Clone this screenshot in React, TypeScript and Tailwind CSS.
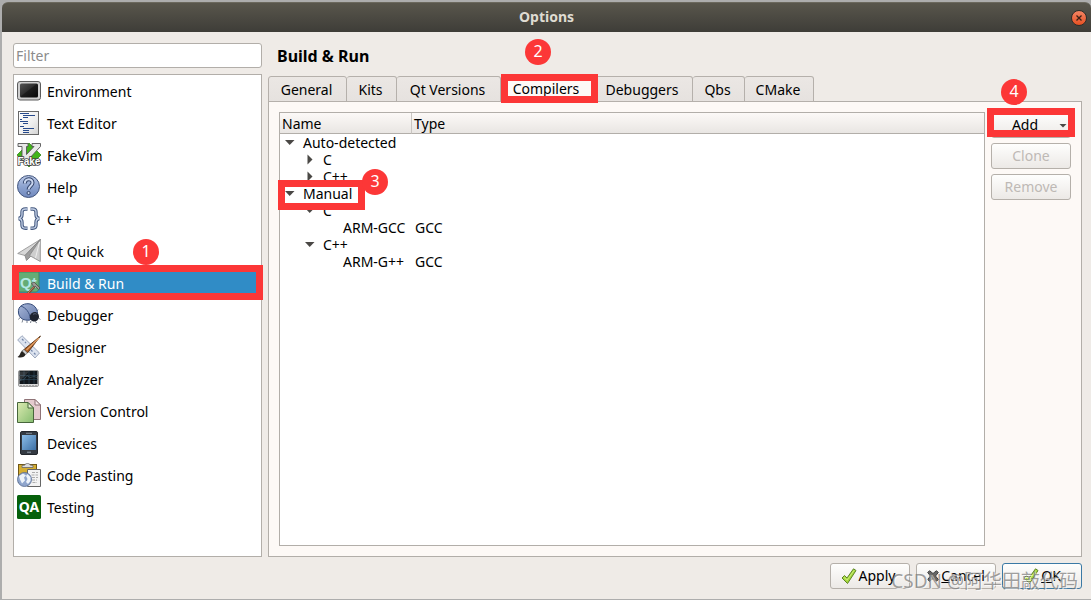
import { useState } from "react";
import type { ReactNode } from "react";
import clsx from "clsx";

function Icon({ children }: { children: ReactNode }) {
  return (
    <svg viewBox="0 0 24 24" className="size-6 shrink-0" aria-hidden="true">
      {children}
    </svg>
  );
}

const EnvironmentIcon = () => (
  <Icon>
    <defs>
      <linearGradient id="envScreen" x1="0" y1="0" x2="1" y2="1">
        <stop offset="0" stopColor="#555" />
        <stop offset="0.45" stopColor="#303030" />
        <stop offset="0.5" stopColor="#1c1c1c" />
        <stop offset="1" stopColor="#080808" />
      </linearGradient>
    </defs>
    <rect x="0.5" y="2.5" width="23" height="18.5" rx="2.5" fill="#cfcfcf" stroke="#5c5c5c" />
    <rect x="3" y="4.5" width="18" height="14" rx="1.5" fill="url(#envScreen)" />
  </Icon>
);

const TextEditorIcon = () => (
  <Icon>
    <defs>
      <linearGradient id="sheet" x1="0" y1="0" x2="1" y2="1">
        <stop offset="0" stopColor="#fff" />
        <stop offset="0.6" stopColor="#eee" />
        <stop offset="1" stopColor="#d2d2d2" />
      </linearGradient>
    </defs>
    <rect x="1.5" y="0.5" width="20" height="23" fill="url(#sheet)" stroke="#686868" />
    <path
      d="M3 2.5h9M6 4.5h12M6 6.5h5M3 8.5h2M3 10.5h8M6 12.5h5M3 15.5h4M6 17.5h11M6 19.5h6M6 21.5h6"
      stroke="#274a8c"
    />
  </Icon>
);

const FakeVimIcon = () => (
  <Icon>
    <path d="M12 0l12 12-12 12L0 12z" fill="#41b41a" stroke="#287b0d" strokeWidth="0.7" />
    <path
      d="M1 0.5h10v3H9.500v8L17 3.500h-2v-3h8.500v3L10 18H5V3.500H1z"
      fill="#e8e8e8"
      stroke="#555"
      strokeWidth="0.9"
    />
    <text
      x="12"
      y="21.500"
      textAnchor="middle"
      fontSize="10"
      fontWeight="700"
      fontFamily="Liberation Sans, sans-serif"
      fill="#fff"
      stroke="#444"
      strokeWidth="1.600"
      paintOrder="stroke"
    >
      Fake
    </text>
  </Icon>
);

const HelpIcon = () => (
  <Icon>
    <defs>
      <linearGradient id="helpBall" x1="0" y1="0" x2="0" y2="1">
        <stop offset="0" stopColor="#b9c8e6" />
        <stop offset="0.5" stopColor="#8da3d0" />
        <stop offset="1" stopColor="#7088bd" />
      </linearGradient>
    </defs>
    <circle cx="11.5" cy="11.5" r="11" fill="url(#helpBall)" stroke="#43557d" />
    <path
      d="M7.800 8.500C7.800 2.800 15.500 3 15.500 7.800c0 3.200-3.900 3.200-3.900 6.700"
      fill="none"
      stroke="#35466c"
      strokeWidth="4"
    />
    <path
      d="M7.800 8.500C7.800 2.800 15.500 3 15.500 7.800c0 3.200-3.900 3.200-3.900 6.700"
      fill="none"
      stroke="#c9d6ef"
      strokeWidth="2"
    />
    <circle cx="11.600" cy="18" r="1.600" fill="#c9d6ef" stroke="#35466c" />
  </Icon>
);

const bracesPath =
  "M10.500 2H8.500C6 2 5 3 5 5v2.500c0 2-1 3.500-3.200 4C4 12 5 13.500 5 15.500V18c0 2 1 3.200 3.500 3.200h2M13.500 2h2C18 2 19 3 19 5v2.500c0 2 1 3.500 3.200 4C20 12 19 13.500 19 15.500V18c0 2-1 3.200-3.500 3.200h-2";

const CppIcon = () => (
  <Icon>
    <path d={bracesPath} fill="none" stroke="#465a80" strokeWidth="3.400" />
    <path d={bracesPath} fill="none" stroke="#c3d0e6" strokeWidth="1.300" />
  </Icon>
);

const QtQuickIcon = () => (
  <Icon>
    <path d="M23.300 0.500L0.700 14.500l7.300 2z" fill="#d7d7d7" stroke="#8e8e8e" strokeWidth="0.8" />
    <path d="M23.300 0.500L8 16.500l1.500 5 4-4z" fill="#9d9d9d" stroke="#808080" strokeWidth="0.8" />
    <path d="M23.300 0.500l-10.800 16 10.800 6z" fill="#cecece" stroke="#858585" strokeWidth="0.8" />
    <path d="M22.500 3l-4 16" stroke="#efefef" />
  </Icon>
);

const BuildRunIcon = () => (
  <Icon>
    <path d="M2.500 1H22v17.500L19.500 21H0.500V3z" fill="#65ac75" stroke="#43875e" />
    <text
      x="3"
      y="17"
      fontSize="15"
      fontWeight="700"
      fontFamily="Liberation Sans Narrow, Liberation Sans, sans-serif"
      fill="#b4e8e6"
    >
      Qt
    </text>
    <path d="M18.500 14.500l-7.500 8" stroke="#7b4d32" strokeWidth="2.400" />
    <path d="M18.500 14l-7.500 8" stroke="#b98b69" />
    <path d="M14.500 12.500l2.500-1.500 6 6-1.500 1.500-3-3-1.500.5z" fill="#9a9a94" stroke="#504e48" strokeWidth="0.8" />
  </Icon>
);

const DebuggerIcon = () => (
  <Icon>
    <defs>
      <linearGradient id="bugShell" x1="0" y1="0" x2="1" y2="1">
        <stop offset="0" stopColor="#a9b8d9" />
        <stop offset="1" stopColor="#6177a8" />
      </linearGradient>
    </defs>
    <path
      d="M3.500 14l-2 2.500M6 16.500l-1 3M10 17.500v2.500M20 8l1-1.500M21.500 15l2 1.500M14 18l-.5 2M18 18.500l2 1.500"
      stroke="#5b6474"
      strokeWidth="0.8"
    />
    <path
      d="M1.500 10C0.500 3 6.500 0.700 11 0.700c6 .2 9.500 5 9.500 9.300L13 17C7 18 2.300 15.500 1.500 10z"
      fill="url(#bugShell)"
      stroke="#354b79"
    />
    <path d="M4 3C9 5 12.500 9 13.500 16" fill="none" stroke="#3a5180" />
    <path d="M13 12.500c1-3.500 6-5 8-2 2 3 1 7-3 8-3.500.5-6-2.500-5-6z" fill="#1e2431" />
    <path d="M16 11.500c1-1 2.500-1 3.500-.3" stroke="#59657b" fill="none" />
  </Icon>
);

const DesignerIcon = () => (
  <Icon>
    <path d="M0.700 5L5 0.700 22.500 18 18 23z" fill="#dce3ef" stroke="#9ca7bd" />
    <path d="M5 4l1.500 1.500M8 7l1 1M14 15l1.500 1.500M17 18l1.500 1.500" stroke="#7487aa" strokeWidth="1.300" />
    <path d="M23.500 1L10.500 18 7 14.500 21 3z" fill="#aa5b21" stroke="#472409" strokeWidth="0.8" />
    <path d="M22 3L9.500 15" stroke="#e2a067" strokeWidth="1.200" />
    <path d="M10.500 18L7 14.500l-2 1.300L8.500 19.500z" fill="#d3d3d3" stroke="#555" strokeWidth="0.600" />
    <path d="M5 16c-2 1-1.500 4.500-4.500 6 3.500 1.300 7.500 0 8-2.500z" fill="#282522" />
  </Icon>
);

const AnalyzerIcon = () => (
  <Icon>
    <rect x="1.500" y="3.500" width="20" height="16" rx="1.500" fill="#d7d7d7" stroke="#9b9b9b" />
    <rect x="2.500" y="4" width="18" height="13" fill="#10161b" />
    <path d="M7 4v13M12 4v13M17 4v13M2.500 8.500h18M2.500 12.500h18" stroke="#2b4455" strokeWidth="0.700" />
    <path d="M3 13.500l4-1 3-4 3 2 4-1 3 1" stroke="#45606f" fill="none" strokeWidth="0.600" />
    <path d="M3 4.500h9L3 14z" fill="#fff" opacity="0.15" />
    <path d="M3 18.500h17" stroke="#a5a5a5" strokeDasharray="2 1" />
  </Icon>
);

const VersionControlIcon = () => (
  <Icon>
    <defs>
      <linearGradient id="greenSheet" x1="0" y1="0" x2="1" y2="1">
        <stop offset="0" stopColor="#dceab1" />
        <stop offset="1" stopColor="#86bd70" />
      </linearGradient>
    </defs>
    <path d="M7.500 0.500H18l5.500 5.500v14.500h-16z" fill="#e4cbce" stroke="#8f7377" />
    <path d="M18 0.500V6h5.500z" fill="#f5e9ea" stroke="#8f7377" />
    <path d="M0.500 3.500H11l5.500 5.500v14.500H0.500z" fill="url(#greenSheet)" stroke="#47663b" />
    <path d="M11 3.500V9h5.500z" fill="#e3f0cf" stroke="#47663b" />
  </Icon>
);

const DevicesIcon = () => (
  <Icon>
    <defs>
      <linearGradient id="deviceScreen" x1="0" y1="0" x2="1" y2="1">
        <stop offset="0" stopColor="#8bbde8" />
        <stop offset="1" stopColor="#3d70a5" />
      </linearGradient>
    </defs>
    <rect x="3.500" y="0.500" width="17" height="23" rx="1.500" fill="#343a42" stroke="#22262c" />
    <rect x="5" y="4" width="14" height="15" fill="url(#deviceScreen)" />
    <path d="M9 2.300h6" stroke="#808a94" />
    <path d="M10 21.300h4" stroke="#77818c" strokeWidth="1.500" />
  </Icon>
);

const CodePastingIcon = () => (
  <Icon>
    <rect x="1.500" y="1.500" width="18" height="18" fill="#d5ae32" stroke="#725817" />
    <path d="M5 4.500V2.500l3-.5c0-2 5-2 5 0l3 .5v2z" fill="#ddd" stroke="#666" strokeWidth="0.8" />
    <path d="M10.500 6.500h13v17h-13z" fill="#f3f3f3" stroke="#666" />
    <path
      d="M15 9.500h6M14.500 12h6.500M15 14.500h6M15 17h5M15.500 19.500h4.500"
      stroke="#9a9a9a"
      strokeWidth="0.8"
      strokeDasharray="3 1"
    />
    <circle cx="7.500" cy="16.500" r="7" fill="#8fa5cc" stroke="#556a91" strokeWidth="0.8" />
    <path d="M2 13l4-2.500 3 2-2 2 1 3-3 3-2-4zM10.500 11l3 3v4l-2.500 3-2-2 1.500-3-1.500-3z" fill="#edf3fa" />
  </Icon>
);

const TestingIcon = () => (
  <Icon>
    <rect width="24" height="24" rx="1.500" fill="#06600b" />
    <text
      x="12"
      y="16.500"
      textAnchor="middle"
      fontSize="14"
      fontWeight="700"
      fontFamily="Noto Sans, sans-serif"
      fill="#fff"
    >
      QA
    </text>
  </Icon>
);

const categories = [
  { name: "Environment", Glyph: EnvironmentIcon },
  { name: "Text Editor", Glyph: TextEditorIcon },
  { name: "FakeVim", Glyph: FakeVimIcon },
  { name: "Help", Glyph: HelpIcon },
  { name: "C++", Glyph: CppIcon },
  { name: "Qt Quick", Glyph: QtQuickIcon },
  { name: "Build & Run", Glyph: BuildRunIcon },
  { name: "Debugger", Glyph: DebuggerIcon },
  { name: "Designer", Glyph: DesignerIcon },
  { name: "Analyzer", Glyph: AnalyzerIcon },
  { name: "Version Control", Glyph: VersionControlIcon },
  { name: "Devices", Glyph: DevicesIcon },
  { name: "Code Pasting", Glyph: CodePastingIcon },
  { name: "Testing", Glyph: TestingIcon },
];

const tabs = [
  { name: "General", width: "w-[79px]" },
  { name: "Kits", width: "w-[50px]" },
  { name: "Qt Versions", width: "w-[104px]" },
  { name: "Compilers", width: "w-[93px]" },
  { name: "Debuggers", width: "w-[99px]" },
  { name: "Qbs", width: "w-[52px]" },
  { name: "CMake", width: "w-[69px]" },
];

const treeRows = [
  { name: "Auto-detected", type: "", indent: "pl-1", toggle: "open" },
  { name: "C", type: "", indent: "pl-6", toggle: "closed" },
  { name: "C++", type: "", indent: "pl-6", toggle: "closed" },
  { name: "Manual", type: "", indent: "pl-1", toggle: "open" },
  { name: "C", type: "", indent: "pl-6", toggle: "open" },
  { name: "ARM-GCC", type: "GCC", indent: "pl-11", toggle: "none" },
  { name: "C++", type: "", indent: "pl-6", toggle: "open" },
  { name: "ARM-G++", type: "GCC", indent: "pl-11", toggle: "none" },
];

/* Numbered step marker; the caller places it over the control it explains. */
function Step({ n, className }: { n: number; className: string }) {
  return (
    <span
      className={clsx(
        "pointer-events-none absolute z-20 flex size-[26px] items-center justify-center rounded-full bg-[#fc3737] pb-0.5 text-base font-normal text-white",
        className,
      )}
    >
      {n}
    </span>
  );
}

/* Red outline drawn over the control that a step refers to. */
function Frame({ className }: { className: string }) {
  return (
    <span
      className={clsx("pointer-events-none absolute z-10 border-[7px] border-[#fc3737]", className)}
    />
  );
}

function Check() {
  return (
    <svg viewBox="0 0 16 16" className="size-4 shrink-0" aria-hidden="true">
      <path
        d="M1 10l2.500-2.500L6 10 12.500 0.800 15 2.500 6.500 15.500z"
        fill="#a5d83c"
        stroke="#5d8426"
        strokeLinejoin="round"
      />
      <path d="M3 9.200l3 3L13 2.500" fill="none" stroke="#d5f08b" strokeWidth="0.8" />
    </svg>
  );
}

function Cross() {
  return (
    <svg viewBox="0 0 12 12" className="size-3 shrink-0" aria-hidden="true">
      <path
        d="M0.700 2.500L2.500 0.700 6 3.500 9.500 0.700l1.800 1.800L8.500 6l2.800 3.500-1.800 1.800L6 8.500l-3.500 2.800L0.700 9.500 3.500 6z"
        fill="#666"
        stroke="#414141"
        strokeLinejoin="round"
      />
    </svg>
  );
}

const buttonShape =
  "flex h-[26px] w-20 items-center justify-center rounded-[3px] border bg-linear-to-b from-[#fefefd] to-[#ece9e6]";
const buttonStyle = clsx(buttonShape, "border-[#b5b0aa]");
const defaultButtonStyle = clsx(buttonShape, "border-[#3a79a5]");

export default function App() {
  const [category, setCategory] = useState("Build & Run");
  const [tab, setTab] = useState("Compilers");

  return (
    <div className="flex min-h-screen flex-col border-t-2 border-b border-l-2 border-[#adadad] bg-[#adadad] font-['Noto_Sans','Noto_Sans_CJK_SC',sans-serif] text-sm text-black">
      <header className="relative flex h-[30px] items-center justify-center rounded-t-md border-t border-[#6b685d] bg-linear-to-b from-[#59564c] to-[#3e3d38]">
        <h1 className="pb-0.5 font-bold text-[#dfdbd2]">Options</h1>
        <button
          aria-label="Close"
          className="absolute right-1 flex size-4 items-center justify-center rounded-full border border-[#2f2d29] bg-linear-to-b from-[#f38362] to-[#e6501f]"
        >
          <svg viewBox="0 0 8 8" className="size-2" aria-hidden="true">
            <path d="M1.500 1.500l5 5M6.500 1.500l-5 5" stroke="#3b2017" strokeWidth="1.300" />
          </svg>
        </button>
      </header>

      <main className="flex flex-1 flex-col bg-[#efebe7] pt-[11px] pr-[9px] pb-2.5 pl-[11px]">
        <div className="flex flex-1 gap-1.5">
          <aside className="flex w-[249px] shrink-0 flex-col gap-1.5">
            <input
              type="text"
              aria-label="Filter"
              placeholder="Filter"
              className="h-[25px] w-full rounded-[3px] border border-[#b2aea9] bg-white px-0.5 outline-none placeholder:text-[#8c8c8c]"
            />
            <ul className="flex-1 border border-[#b2aea9] bg-white">
              {categories.map(({ name, Glyph }) => (
                <li key={name} className="relative">
                  <button
                    onClick={() => setCategory(name)}
                    className={clsx(
                      "flex h-8 w-full items-center gap-1.5 pl-[3px] text-left",
                      category === name && "bg-[#308cc6] text-white",
                    )}
                  >
                    <Glyph />
                    <span className="pt-0.5">{name}</span>
                  </button>
                  {name === "Build & Run" && (
                    <>
                      <Frame className="-inset-x-0.5 -top-0.5 h-[35px]" />
                      <Step n={1} className="-top-7 left-[119px]" />
                    </>
                  )}
                </li>
              ))}
            </ul>
          </aside>

          <section className="flex min-w-0 flex-1 flex-col">
            <h2 className="h-[33px] pl-[9px] text-base leading-[26px] font-bold">{category}</h2>
            <div role="tablist" className="relative z-10 -mb-px flex h-[26px]">
              {tabs.map(({ name, width }) => (
                <div key={name} className={clsx("relative", width)}>
                  <button
                    role="tab"
                    aria-selected={tab === name}
                    onClick={() => setTab(name)}
                    className={clsx(
                      "flex h-full w-full items-center justify-center rounded-t-[3px] border-t border-r border-[#b5b0ab] pr-0.5 whitespace-nowrap",
                      tab === name
                        ? "bg-[#fdf9f6] pb-0.5"
                        : "border-b bg-linear-to-b from-[#ebe7e4] to-[#e6e2df] pt-0.5",
                      name === "General" && "border-l",
                    )}
                  >
                    {name}
                  </button>
                  {name === "Compilers" && (
                    <>
                      <Frame className="-top-0.5 -right-1 left-0 h-[29px]" />
                      <Step n={2} className="-top-[37px] left-6" />
                    </>
                  )}
                </div>
              ))}
            </div>

            <div
              role="tabpanel"
              className="flex flex-1 gap-1.5 border border-[#b2aea9] bg-[#fdf9f6] p-2.5"
            >
              <div className="min-w-0 flex-1 border border-[#b2aea9] bg-white">
                <table className="w-full table-fixed border-separate border-spacing-0 text-left">
                  <thead>
                    <tr className="h-[21px] bg-linear-to-b from-[#fcf9f7] to-[#e8e5e2] leading-[18px]">
                      <th className="w-[132px] border-r border-b border-[#b2aea9] border-r-[#c9c5c1] p-0 pt-0.5 pl-0.5 font-normal">
                        Name
                      </th>
                      <th className="border-b border-[#b2aea9] p-0 pt-0.5 pl-0.5 font-normal">Type</th>
                    </tr>
                  </thead>
                  <tbody>
                    {treeRows.map(({ name, type, indent, toggle }, i) => (
                      <tr key={i} className="h-[17px] leading-[17px]">
                        <td className="p-0">
                          <div className={clsx("relative flex items-center gap-1.5 whitespace-nowrap", indent)}>
                            <svg viewBox="0 0 13 13" className="size-[13px] shrink-0" aria-hidden="true">
                              {toggle === "open" && <path d="M1 4h9.500L5.700 9z" fill="#4a4845" />}
                              {toggle === "closed" && <path d="M3.500 1.500L8.500 6.500 3.500 11.500z" fill="#4a4845" />}
                            </svg>
                            {name}
                            {name === "Manual" && (
                              <>
                                <Frame className="-top-[5px] -left-0.5 h-[30px] w-[87px]" />
                                <Step n={3} className="-top-4 left-[82px]" />
                              </>
                            )}
                          </div>
                        </td>
                        <td className="p-0 pl-[3px]">{type}</td>
                      </tr>
                    ))}
                  </tbody>
                </table>
              </div>

              <div className="flex w-20 shrink-0 flex-col gap-[5px]">
                <div className="relative">
                  <button className={clsx(buttonStyle, "pr-3")}>
                    Add
                    <svg viewBox="0 0 8 5" className="absolute right-1 h-[5px] w-2" aria-hidden="true">
                      <path d="M0.500 1h7L4 4.500z" fill="#4a4845" />
                    </svg>
                  </button>
                  <Frame className="-inset-x-1 -top-1 h-[29px]" />
                  <Step n={4} className="-top-[33px] left-2.5" />
                </div>
                <button disabled className={clsx(buttonStyle, "text-[#beb9b5]")}>
                  Clone
                </button>
                <button disabled className={clsx(buttonStyle, "text-[#beb9b5]")}>
                  Remove
                </button>
              </div>
            </div>
          </section>
        </div>

        <footer className="relative flex justify-end gap-1.5 pt-1.5">
          <button className={clsx(buttonStyle, "gap-0.5 pr-1")}>
            <Check />
            Apply
          </button>
          <button className={clsx(buttonStyle, "gap-0.5")}>
            <Cross />
            <span>
              <u>C</u>ancel
            </span>
          </button>
          <button className={clsx(defaultButtonStyle, "gap-0.5")}>
            <Check />
            <span>
              <u>O</u>K
            </span>
          </button>
          <span className="pointer-events-none absolute right-1 -bottom-1 text-[19px] leading-6 whitespace-nowrap text-[#777777]/70 [text-shadow:1px_1px_0_#ffffffb0]">
            CSDN @阿华田敲代码
          </span>
        </footer>
      </main>
    </div>
  );
}
